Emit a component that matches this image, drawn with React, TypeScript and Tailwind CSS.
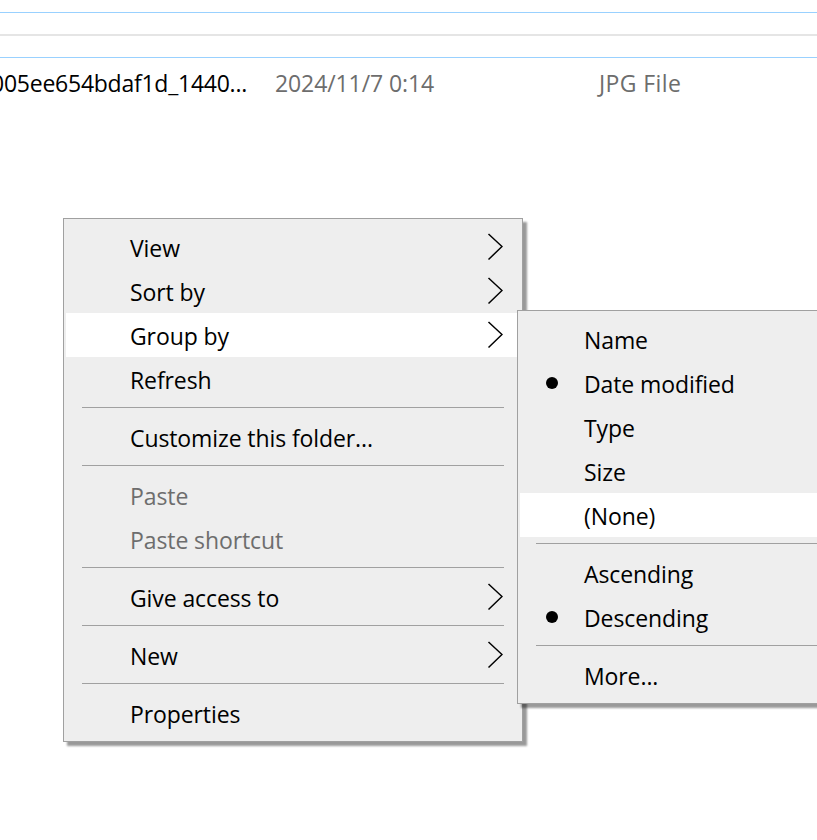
const FONT = "font-['Open_Sans','Noto_Sans',sans-serif]"

type Item =
  | { kind: 'sep' }
  | { kind: 'item'; label: string; arrow?: boolean; hover?: boolean; disabled?: boolean; bullet?: boolean }

const mainMenu: Item[] = [
  { kind: 'item', label: 'View', arrow: true },
  { kind: 'item', label: 'Sort by', arrow: true },
  { kind: 'item', label: 'Group by', arrow: true, hover: true },
  { kind: 'item', label: 'Refresh' },
  { kind: 'sep' },
  { kind: 'item', label: 'Customize this folder...' },
  { kind: 'sep' },
  { kind: 'item', label: 'Paste', disabled: true },
  { kind: 'item', label: 'Paste shortcut', disabled: true },
  { kind: 'sep' },
  { kind: 'item', label: 'Give access to', arrow: true },
  { kind: 'sep' },
  { kind: 'item', label: 'New', arrow: true },
  { kind: 'sep' },
  { kind: 'item', label: 'Properties' },
]

const subMenu: Item[] = [
  { kind: 'item', label: 'Name' },
  { kind: 'item', label: 'Date modified', bullet: true },
  { kind: 'item', label: 'Type' },
  { kind: 'item', label: 'Size' },
  { kind: 'item', label: '(None)', hover: true },
  { kind: 'sep' },
  { kind: 'item', label: 'Ascending' },
  { kind: 'item', label: 'Descending', bullet: true },
  { kind: 'sep' },
  { kind: 'item', label: 'More...' },
]

function Chevron() {
  return (
    <svg width="16" height="28" viewBox="0 0 16 28" className="ml-auto mr-[17px] shrink-0">
      <path d="M1.5 1L15 13.5L1.5 26.5" fill="none" stroke="#000" strokeWidth="1.5" />
    </svg>
  )
}

function Menu({ items }: { items: Item[] }) {
  return (
    <>
      {items.map((it, i) =>
        it.kind === 'sep' ? (
          <div key={i} className="h-[14px] pt-1.5 px-4">
            <div className="h-px bg-[#a0a0a0]" />
          </div>
        ) : (
          <div
            key={i}
            className={`flex h-11 items-center text-[23px] tracking-[-0.1px] ${it.hover ? 'bg-white' : ''} ${
              it.disabled ? 'text-[#6d6d6d]' : 'text-black'
            }`}
          >
            <div className="flex w-16 shrink-0 justify-center">
              {it.bullet && <span className="h-3 w-3 rounded-full bg-black" />}
            </div>
            <span className="mt-0.5">{it.label}</span>
            {it.arrow && <Chevron />}
          </div>
        ),
      )}
    </>
  )
}

export default function App() {
  return (
    <div className={`relative h-[840px] w-[817px] overflow-hidden bg-white ${FONT}`}>
      <div className="h-3" />
      <div className="h-px bg-[#99d1ff]" />
      <div className="h-[21px]" />
      <div className="h-0.5 bg-[#e5e5e5]" />
      <div className="h-[21px]" />
      <div className="h-px bg-[#99d1ff]" />

      <div className="flex h-[50px] items-center whitespace-nowrap text-[23px] tracking-[-0.1px]">
        <div className="flex w-[247px] shrink-0 justify-end overflow-hidden text-black">
          <span className="shrink-0 tracking-[-0.25px]">005ee654bdaf1d_1440...</span>
        </div>
        <div className="ml-7 w-[324px] shrink-0 text-[#6d6d6d]">2024/11/7 0:14</div>
        <div className="tracking-[0.4px] text-[#6d6d6d]">JPG File</div>
      </div>

      <div className="absolute left-[63px] top-[218px] w-[460px] border border-[#a0a0a0] bg-[#eeeeee] px-0.5 py-1.5 shadow-[4px_4px_2px_rgba(0,0,0,0.4)]">
        <Menu items={mainMenu} />
      </div>

      <div className="absolute left-[517px] top-[310px] w-[340px] border border-[#a0a0a0] bg-[#eeeeee] px-0.5 py-1.5 shadow-[4px_4px_2px_rgba(0,0,0,0.4)]">
        <Menu items={subMenu} />
      </div>
    </div>
  )
}
